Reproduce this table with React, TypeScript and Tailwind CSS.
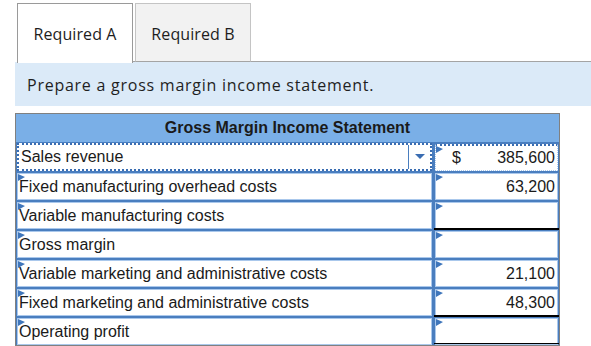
import React from "react";

type Row = {
  label: string;
  value: string;
  dollar?: boolean;
  focus?: boolean;
  under?: "single" | "double";
};

const rows: Row[] = [
  { label: "Sales revenue", value: "385,600", dollar: true, focus: true },
  { label: "Fixed manufacturing overhead costs", value: "63,200" },
  { label: "Variable manufacturing costs", value: "", under: "single" },
  { label: "Gross margin", value: "" },
  { label: "Variable marketing and administrative costs", value: "21,100" },
  { label: "Fixed marketing and administrative costs", value: "48,300", under: "single" },
  { label: "Operating profit", value: "", under: "double" },
];

function Marker() {
  return (
    <svg className="absolute left-0 top-0" width="7" height="8" viewBox="0 0 7 8">
      <polygon points="0,0 7,3 0,7" fill="#3f76bb" />
    </svg>
  );
}

export default function App() {
  const sans = { fontFamily: '"Liberation Sans", Arial, sans-serif' };
  const ui = { fontFamily: '"Open Sans", sans-serif' };
  return (
    <div className="w-[591px] h-[346px] bg-white overflow-hidden pl-[15px]">
      {/* tab strip */}
      <div className="flex items-end h-[62px] pt-[3px]" style={ui}>
        <div className="w-[2px] h-full" />
        <div className="relative z-10 -mb-px w-[116px] h-[60px] border border-b-0 border-[#9a9a9a] bg-white flex items-center justify-center text-[16px] tracking-[0.1px] text-[#1d1d1d]">
          Required A
        </div>
        <div className="w-[2px] self-end border-b border-[#a4a4a4]" />
        <div className="w-[116px] h-[59px] border border-[#c4c4c4] border-b-[#a4a4a4] bg-[#f2f2f2] flex items-center justify-center text-[16px] tracking-[0.1px] text-[#1d1d1d] pt-[2px]">
          Required B
        </div>
        <div className="flex-1 border-b border-[#a4a4a4]" />
      </div>

      {/* instruction bar */}
      <div
        className="h-[44px] bg-[#dbeaf8] flex items-center pl-[12px] pt-[2px] text-[16px] tracking-[0.75px] text-[#1f1f1f]"
        style={ui}
      >
        Prepare a gross margin income statement.
      </div>

      {/* statement table */}
      <div className="mt-[7px] w-[545px] border border-[#808080] bg-[#4a7ebf]" style={sans}>
        <div className="h-[28px] bg-[#7aafe7] flex items-center justify-center text-[16px] font-bold text-[#1a1a1a]">
          Gross Margin Income Statement
        </div>
        {rows.map((r, i) => (
          <div key={i} className="flex gap-[3px] px-[1px] pt-[2px] h-[29px]">
            {r.focus ? (
              <div className="flex-1 h-[28px] -mt-[1px] bg-white border-2 border-dotted border-[#3a6db2] flex items-center">
                <span className="pl-[2px] flex-1 text-[16px] text-[#1a1a1a] leading-none">{r.label}</span>
                <div className="w-[22px] h-full border-l border-[#4a7ebf] flex items-center justify-center">
                  <svg width="10" height="6" viewBox="0 0 10 6">
                    <polygon points="0,0 10,0 5,5" fill="#3a6db2" />
                  </svg>
                </div>
              </div>
            ) : (
              <div className="relative flex-1 h-[27px] bg-white border border-[#aac8ec] flex items-center">
                <Marker />
                <span className="pl-[1px] text-[16px] text-[#1a1a1a] leading-none">{r.label}</span>
              </div>
            )}
            <div
              className={
                "relative w-[123px] h-[27px] bg-white border border-[#aac8ec] flex items-center pr-[2px] " +
                (r.focus ? "border-t-2 border-t-[#3a6db2] border-dotted" : "")
              }
            >
              <Marker />
              {r.dollar && <span className="pl-[16px] text-[16px] text-[#1a1a1a]">$</span>}
              <span className="ml-auto text-[16px] text-[#1a1a1a]">{r.value}</span>
              {r.under === "single" && (
                <div className="absolute left-[-2px] right-[-2px] bottom-[-2px] h-[2px] bg-black" />
              )}
              {r.under === "double" && (
                <div className="absolute left-[-2px] right-[-2px] bottom-[-3px] h-[4px] border-y border-black" />
              )}
            </div>
          </div>
        ))}
      </div>
    </div>
  );
}
